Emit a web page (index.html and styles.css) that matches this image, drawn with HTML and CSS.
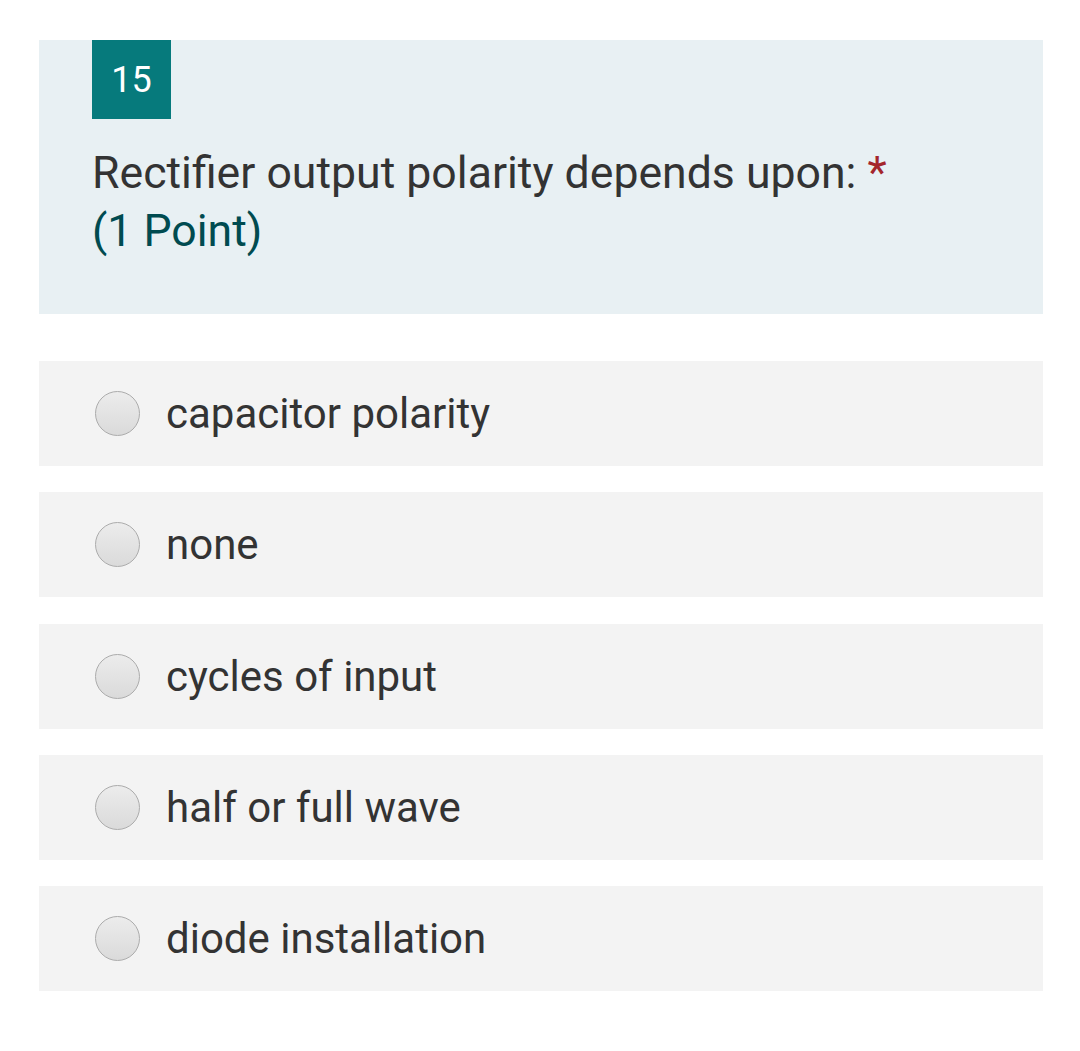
FILE: index.html
```html
<!DOCTYPE html>
<html lang="en">
<head>
  <meta charset="UTF-8">
  <title>Question 15</title>
  <link rel="stylesheet" href="styles.css">
</head>
<body>

  <div class="page">
    <!-- Question header -->
    <div class="question">
      <div class="number">15</div>
      <div class="title">
        <span class="text">Rectifier output polarity depends upon:</span> <span class="required">*</span><br>
        <span class="points">(1 Point)</span>
      </div>
    </div>

    <!-- Answer choices -->
    <div class="choices">
      <label class="choice"><span class="radio"></span><span class="label">capacitor polarity</span></label>
      <label class="choice"><span class="radio"></span><span class="label">none</span></label>
      <label class="choice"><span class="radio"></span><span class="label">cycles of input</span></label>
      <label class="choice"><span class="radio"></span><span class="label">half or full wave</span></label>
      <label class="choice"><span class="radio"></span><span class="label">diode installation</span></label>
    </div>
  </div>

</body>
</html>
```

FILE: styles.css
```css
body {
  margin: 0;
  padding: 0;
  background: #fff;
  font-family: Roboto, "Noto Sans", sans-serif;
  color: #333;
}

.page {
  width: 1004px;
  margin: 40px 0 0 39px;
}

.question {
  background: #e8f0f3;
  height: 274px;
  padding: 0 53px;
  box-sizing: border-box;
}

.number {
  width: 79px;
  height: 79px;
  background: #067a7c;
  color: #fff;
  font-size: 36px;
  display: flex;
  align-items: center;
  justify-content: center;
}

.title {
  margin-top: 25px;
  font-size: 44.6px;
  line-height: 58px;
  color: #333;
}

.required {
  color: #a4262c;
}

.points {
  color: #004b50;
}

.choices {
  margin-top: 47px;
  display: flex;
  flex-direction: column;
  gap: 26.25px;
}

.choice {
  height: 105px;
  background: #f3f3f3;
  display: flex;
  align-items: center;
  padding-left: 56px;
}

.radio {
  width: 43px;
  height: 43px;
  border-radius: 50%;
  border: 1px solid #ababab;
  background: linear-gradient(#ececec, #dadada);
  flex-shrink: 0;
}

.label {
  margin-left: 26px;
  font-size: 42px;
  color: #333;
}
```
